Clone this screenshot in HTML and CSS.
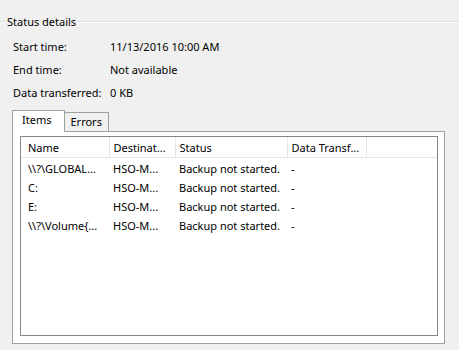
FILE: index.html
```html
<!DOCTYPE html>
<html lang="en">
<head>
  <meta charset="UTF-8">
  <title>Status details</title>
  <link rel="stylesheet" href="styles.css">
</head>
<body>

  <div class="group">
    <div class="group-title">
      <span class="etch etch-short"></span>
      <span class="title-text">Status details</span>
      <span class="etch etch-long"></span>
    </div>

    <div class="details">
      <span class="label">Start time:</span>
      <span class="value">11/13/2016 10:00 AM</span>
      <span class="label">End time:</span>
      <span class="value">Not available</span>
      <span class="label">Data transferred:</span>
      <span class="value">0 KB</span>
    </div>
  </div>

  <div class="tabs">
    <div class="tab-strip">
      <div class="tab active">Items</div>
      <div class="tab">Errors</div>
    </div>

    <div class="tab-page">
      <div class="listview">
        <table>
          <colgroup>
            <col class="c-name">
            <col class="c-dest">
            <col class="c-status">
            <col class="c-data">
            <col>
          </colgroup>
          <thead>
            <tr>
              <th class="first">Name</th>
              <th>Destinat...</th>
              <th>Status</th>
              <th>Data Transf...</th>
              <th class="filler"></th>
            </tr>
          </thead>
          <tbody>
            <tr>
              <td class="first">\\?\GLOBAL...</td>
              <td>HSO-M...</td>
              <td>Backup not started.</td>
              <td>-</td>
              <td></td>
            </tr>
            <tr>
              <td class="first">C:</td>
              <td>HSO-M...</td>
              <td>Backup not started.</td>
              <td>-</td>
              <td></td>
            </tr>
            <tr>
              <td class="first">E:</td>
              <td>HSO-M...</td>
              <td>Backup not started.</td>
              <td>-</td>
              <td></td>
            </tr>
            <tr>
              <td class="first">\\?\Volume{...</td>
              <td>HSO-M...</td>
              <td>Backup not started.</td>
              <td>-</td>
              <td></td>
            </tr>
          </tbody>
        </table>
      </div>
    </div>
  </div>

</body>
</html>
```

FILE: styles.css
```css
body {
  margin: 0;
  background-color: #f0f0f0;
  color: #000;
  font-family: "Noto Sans", "Liberation Sans", sans-serif;
  font-size: 11px;
  width: 459px;
  height: 350px;
  overflow: hidden;
}

/* group box */
.group {
  padding-top: 13px;
}
.group-title {
  display: flex;
  align-items: center;
  height: 18px;
}
.etch {
  height: 0;
  border-top: 1px solid #dcdcdc;
  border-bottom: 1px solid #ffffff;
}
.etch-short {
  width: 5px;
}
.etch-long {
  flex: 1;
}
.title-text {
  padding: 0 2px;
  line-height: 18px;
}
.details {
  display: grid;
  grid-template-columns: 97px 1fr;
  grid-auto-rows: 23px;
  align-items: center;
  margin-top: 4px;
  padding-left: 13px;
}

/* tab control */
.tabs {
  margin-top: 6px;
  margin-left: 12px;
  width: 433px;
}
.tab-strip {
  display: flex;
  align-items: flex-end;
  height: 21px;
  position: relative;
  z-index: 1;
}
.tab {
  height: 19px;
  box-sizing: border-box;
  padding: 0 6px 0 5px;
  line-height: 18px;
  border: 1px solid #a0a0a0;
  border-bottom: none;
  border-left: none;
  background-color: #f0f0f0;
}
.tab.active {
  height: 22px;
  margin-bottom: -1px;
  padding: 0 13px 0 9px;
  line-height: 17px;
  border-left: 1px solid #a0a0a0;
  background-color: #ffffff;
}
.tab-page {
  height: 213px;
  box-sizing: border-box;
  border: 1px solid #a0a0a0;
  background-color: #ffffff;
  padding: 4px 6px 6px 7px;
}

/* list view */
.listview {
  height: 200px;
  box-sizing: border-box;
  border: 1px solid #828790;
  background-color: #ffffff;
  overflow: hidden;
}
.listview table {
  width: 100%;
  border-collapse: collapse;
  table-layout: fixed;
}
.c-name {
  width: 88px;
}
.c-dest {
  width: 66px;
}
.c-status {
  width: 112px;
}
.c-data {
  width: 79px;
}
th,
td {
  padding: 0 0 0 4px;
  text-align: left;
  font-weight: normal;
  white-space: nowrap;
  overflow: hidden;
}
th {
  height: 20px;
  border-right: 1px solid #e5e5e5;
  border-bottom: 1px solid #e5e5e5;
}
th.filler {
  border-right: none;
}
td {
  height: 19px;
}
tbody tr:first-child td {
  padding-top: 1px;
}
.first {
  padding-left: 7px;
}
```
